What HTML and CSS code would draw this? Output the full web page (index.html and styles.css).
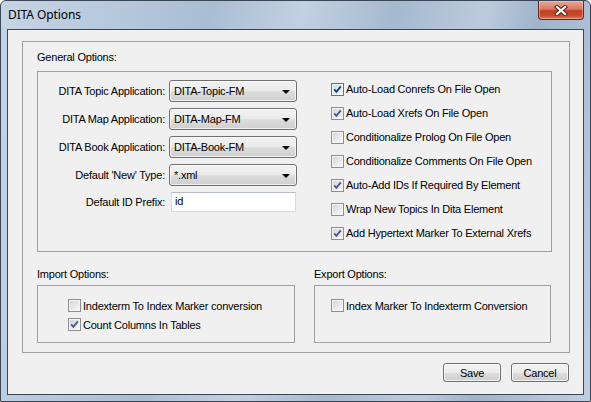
FILE: index.html
```html
<!DOCTYPE html>
<html>
<head>
<meta charset="utf-8">
<title>DITA Options</title>
<link rel="stylesheet" href="styles.css">
</head>
<body>
<div class="window">
  <div class="titlebar">
    <span class="title">DITA Options</span>
    <span class="close">
      <svg width="14" height="11" viewBox="0 0 14 11">
        <path d="M3 2 L11 9 M11 2 L3 9" stroke="#4a2a24" stroke-width="4.2" stroke-linecap="square"/>
        <path d="M3 2 L11 9 M11 2 L3 9" stroke="#ffffff" stroke-width="2.2" stroke-linecap="square"/>
      </svg>
    </span>
  </div>
  <div class="client">
    <div class="frame">
      <div class="legend">General Options:</div>
      <div class="group general">
        <div class="fields">
          <span class="flabel">DITA Topic Application:</span>
          <div class="combo"><span>DITA-Topic-FM</span><i class="arrow"></i></div>
          <span class="flabel">DITA Map Application:</span>
          <div class="combo"><span>DITA-Map-FM</span><i class="arrow"></i></div>
          <span class="flabel">DITA Book Application:</span>
          <div class="combo"><span>DITA-Book-FM</span><i class="arrow"></i></div>
          <span class="flabel">Default 'New' Type:</span>
          <div class="combo"><span>*.xml</span><i class="arrow"></i></div>
          <span class="flabel">Default ID Prefix:</span>
          <div class="textbox">id</div>
        </div>
        <div class="checks">
          <div class="check"><span class="box hot on"></span>Auto-Load Conrefs On File Open</div>
          <div class="check"><span class="box on"></span>Auto-Load Xrefs On File Open</div>
          <div class="check"><span class="box"></span>Conditionalize Prolog On File Open</div>
          <div class="check"><span class="box"></span>Conditionalize Comments On File Open</div>
          <div class="check"><span class="box on"></span>Auto-Add IDs If Required By Element</div>
          <div class="check"><span class="box"></span>Wrap New Topics In Dita Element</div>
          <div class="check"><span class="box on"></span>Add Hypertext Marker To External Xrefs</div>
        </div>
      </div>
      <div class="lower">
        <div class="col import">
          <div class="legend small">Import Options:</div>
          <div class="group sub">
            <div class="check row19"><span class="box"></span>Indexterm To Index Marker conversion</div>
            <div class="check row19"><span class="box on"></span>Count Columns In Tables</div>
          </div>
        </div>
        <div class="col export">
          <div class="legend small">Export Options:</div>
          <div class="group sub">
            <div class="check row19"><span class="box"></span>Index Marker To Indexterm Conversion</div>
          </div>
        </div>
      </div>
    </div>
    <div class="buttons">
      <button class="btn">Save</button>
      <button class="btn">Cancel</button>
    </div>
  </div>
</div>
</body>
</html>
```

FILE: styles.css
```css
html, body {
  margin: 0;
  padding: 0;
}

body {
  width: 591px;
  height: 402px;
  overflow: hidden;
  background: #ffffff;
  font-family: "Liberation Sans", Arial, sans-serif;
  font-size: 11px;
  letter-spacing: -0.22px;
  color: #000000;
}

/* Aero-style window frame */
.window {
  box-sizing: border-box;
  width: 591px;
  height: 402px;
  border: 1px solid #3a4656;
  border-radius: 6px 6px 1px 1px;
  padding: 0 6px 6px;
  display: flex;
  flex-direction: column;
  background:
    linear-gradient(100deg, #c6d5e5 0%, #b6c8dc 18%, #a9bdd3 32%, #c2d1e1 46%, #a5b9cf 60%, #bccbdc 74%, #9fb3ca 82%, #c0cfe0 100%);
}

.titlebar {
  height: 28px;
  flex: none;
  display: flex;
  justify-content: space-between;
  align-items: flex-start;
}

.title {
  font-family: "Noto Sans", "Open Sans", sans-serif;
  font-size: 12px;
  letter-spacing: -0.1px;
  line-height: 28px;
  padding-left: 1px;
  color: #000000;
}

.close {
  box-sizing: border-box;
  width: 46px;
  height: 19px;
  border: 1px solid #5a2c25;
  border-top: none;
  border-radius: 0 0 4px 4px;
  display: flex;
  align-items: center;
  justify-content: center;
  background: linear-gradient(to bottom, #e9a896 0%, #d87763 45%, #c33c22 55%, #c94a2e 80%, #df7a58 100%);
  box-shadow: inset 0 0 0 1px rgba(255, 210, 200, 0.45);
}

.client {
  box-sizing: border-box;
  height: 366px;
  border: 1px solid #3c4654;
  background: #f0f0f0;
  display: flex;
  flex-direction: column;
}

/* outer etched box */
.frame {
  box-sizing: border-box;
  width: 548px;
  height: 312px;
  margin: 11px 0 0 14px;
  border: 1px solid #a0a0a0;
  padding: 0 17px 0 14px;
  display: flex;
  flex-direction: column;
}

.legend {
  height: 29px;
  line-height: 30px;
  flex: none;
}

.group {
  box-sizing: border-box;
  border: 1px solid #a0a0a0;
}

.general {
  width: 515px;
  height: 181px;
  display: flex;
}

.fields {
  display: grid;
  grid-template-columns: 127px 128px;
  column-gap: 4px;
  row-gap: 6px;
  align-items: center;
  align-content: start;
  padding-top: 8px;
}

.flabel {
  text-align: right;
  white-space: nowrap;
}

.combo {
  box-sizing: border-box;
  height: 22px;
  border: 1px solid #707070;
  border-radius: 3px;
  padding: 0 6px 0 4px;
  display: flex;
  align-items: center;
  justify-content: space-between;
  background: linear-gradient(to bottom, #f2f2f2 0%, #ebebeb 50%, #dddddd 51%, #cfcfcf 100%);
  box-shadow: inset 0 0 0 1px rgba(255, 255, 255, 0.7);
}

.arrow {
  width: 0;
  height: 0;
  border-left: 4px solid transparent;
  border-right: 4px solid transparent;
  border-top: 4px solid #000000;
  margin-top: 1px;
}

.textbox {
  box-sizing: border-box;
  width: 125px;
  height: 20px;
  margin-left: 2px;
  border: 1px solid #d5dbe3;
  border-top-color: #b6bcc6;
  background: #ffffff;
  padding-left: 3px;
  line-height: 17px;
}

.checks {
  padding: 5px 0 0 34px;
  display: flex;
  flex-direction: column;
}

.check {
  height: 24px;
  display: flex;
  align-items: center;
  white-space: nowrap;
}

.check.row19 {
  height: 19px;
}

.box {
  box-sizing: border-box;
  width: 13px;
  height: 13px;
  margin-right: 2px;
  flex: none;
  border: 1px solid #8e8f8f;
  background: linear-gradient(135deg, #cfd2d6 0%, #e6e7e9 50%, #fbfbfb 100%);
  box-shadow: inset 0 0 0 1px #f4f4f4;
}

.box.hot {
  border-color: #3c7fb1;
  background: linear-gradient(135deg, #b9dcf2 0%, #def0fb 50%, #f6fbfe 100%);
}

.box.on {
  background-image:
    url("data:image/svg+xml,%3Csvg xmlns='http://www.w3.org/2000/svg' width='11' height='11' viewBox='0 0 11 11'%3E%3Cpath d='M2.2 5.4 L4.4 7.8 L8.8 2.4' fill='none' stroke='%23495c88' stroke-width='1.9'/%3E%3C/svg%3E"),
    linear-gradient(135deg, #cfd2d6 0%, #e6e7e9 50%, #fbfbfb 100%);
}

.box.hot.on {
  background-image:
    url("data:image/svg+xml,%3Csvg xmlns='http://www.w3.org/2000/svg' width='11' height='11' viewBox='0 0 11 11'%3E%3Cpath d='M2.2 5.4 L4.4 7.8 L8.8 2.4' fill='none' stroke='%23213c78' stroke-width='1.9'/%3E%3C/svg%3E"),
    linear-gradient(135deg, #b9dcf2 0%, #def0fb 50%, #f6fbfe 100%);
}

.lower {
  display: flex;
  gap: 19px;
}

.col {
  display: flex;
  flex-direction: column;
}

.legend.small {
  height: 16px;
  line-height: 16px;
  margin: 14px 0 3px;
}

.sub {
  height: 58px;
  padding-top: 10px;
}

.import .sub {
  width: 258px;
  padding-left: 30px;
}

.export .sub {
  width: 237px;
  padding-left: 16px;
}

.buttons {
  display: flex;
  justify-content: flex-end;
  gap: 10px;
  margin: 10px 14px 0 0;
}

.btn {
  box-sizing: border-box;
  width: 58px;
  height: 19px;
  border: 1px solid #707070;
  border-radius: 3px;
  padding: 0;
  font-family: "Liberation Sans", Arial, sans-serif;
  font-size: 11px;
  letter-spacing: -0.22px;
  color: #000000;
  background: linear-gradient(to bottom, #f2f2f2 0%, #ebebeb 50%, #dddddd 51%, #cfcfcf 100%);
  box-shadow: inset 0 0 0 1px rgba(255, 255, 255, 0.7);
}
```
